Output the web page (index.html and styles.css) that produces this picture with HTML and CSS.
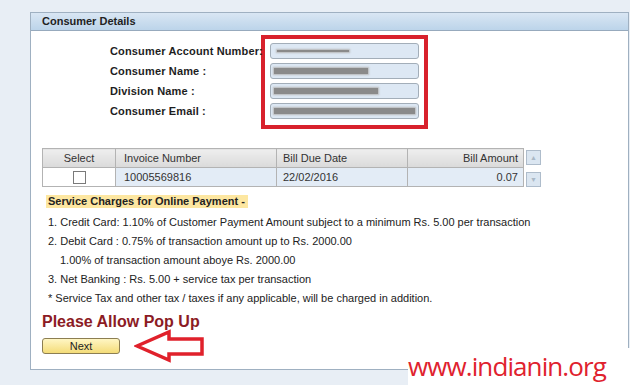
FILE: index.html
```html
<!DOCTYPE html>
<html lang="en">
<head>
    <meta charset="UTF-8">
    <title>Consumer Details</title>
    <link rel="stylesheet" href="styles.css">
</head>
<body>
    <div class="panel">
        <div class="panel-header">Consumer Details</div>

        <div class="details">
            <div class="labels">
                <div class="label">Consumer Account Number:</div>
                <div class="label">Consumer Name :</div>
                <div class="label">Division Name :</div>
                <div class="label">Consumer Email :</div>
            </div>
            <div class="marked">
                <div class="field"><span class="blur thin" style="width: 72px"></span></div>
                <div class="field"><span class="blur" style="width: 94px"></span></div>
                <div class="field"><span class="blur" style="width: 104px"></span></div>
                <div class="field"><span class="blur" style="width: 141px"></span></div>
            </div>
        </div>

        <div class="bills">
            <table class="bill-table">
                <tr>
                    <th class="col-select">Select</th>
                    <th class="col-invoice">Invoice Number</th>
                    <th class="col-date">Bill Due Date</th>
                    <th class="col-amount">Bill Amount</th>
                </tr>
                <tr>
                    <td class="col-select"><span class="checkbox"></span></td>
                    <td class="col-invoice">10005569816</td>
                    <td class="col-date">22/02/2016</td>
                    <td class="col-amount">0.07</td>
                </tr>
            </table>
            <div class="scroller">
                <span class="scroll-btn">&#9650;</span>
                <span class="scroll-btn">&#9660;</span>
            </div>
        </div>

        <div class="charges">
            <div class="charges-title"><span>Service Charges for Online Payment -</span></div>
            <p>1. Credit Card: 1.10% of Customer Payment Amount subject to a minimum Rs. 5.00 per transaction</p>
            <p>2. Debit Card : 0.75% of transaction amount up to Rs. 2000.00</p>
            <p class="indent">1.00% of transaction amount aboye Rs. 2000.00</p>
            <p>3. Net Banking : Rs. 5.00 + service tax per transaction</p>
            <p>* Service Tax and other tax / taxes if any applicable, will be charged in addition.</p>
        </div>

        <div class="popup-note">Please Allow Pop Up</div>
        <div class="actions">
            <button class="next-button">Next</button>
            <svg class="arrow" width="72" height="34" viewBox="0 0 72 34">
                <polygon points="3,17 35,3 35,10 68,10 68,25 35,25 35,31" fill="none" stroke="#e0212b" stroke-width="3.5" stroke-linejoin="miter"/>
            </svg>
        </div>
    </div>

    <div class="watermark">www.indianin.org</div>
</body>
</html>
```

FILE: styles.css
```css
body {
    margin: 0;
    background-color: #e8eef5;
    font-family: "Liberation Sans", Arial, sans-serif;
    color: #1e1e1e;
    height: 385px;
    overflow: hidden;
}
.panel {
    margin: 12px 0 0 30px;
    width: 597px;
    height: 356px;
    background-color: #fff;
    border: 1px solid #9fb0c1;
}
.panel-header {
    height: 17px;
    line-height: 17px;
    padding-left: 11px;
    font-size: 11px;
    font-weight: bold;
    color: #222;
    background: linear-gradient(#d9e6f3, #bcd4ea);
    border-bottom: 1px solid #97aabd;
}
.details {
    display: flex;
    margin: 4px 0 0 79px;
}
.labels {
    width: 151px;
    padding-top: 8px;
}
.label {
    height: 16px;
    line-height: 16px;
    margin-bottom: 4px;
    font-size: 11px;
    font-weight: bold;
    white-space: nowrap;
    letter-spacing: 0.15px;
    position: relative;
    z-index: 1;
}
.marked {
    border: 4px solid #d8212c;
    padding: 4px 5px 6px 5px;
}
.field {
    width: 144px;
    height: 14px;
    margin-bottom: 4px;
    border: 1px solid #a3aeb9;
    border-radius: 3px;
    background-color: #dde8f4;
    display: flex;
    align-items: center;
    padding-left: 3px;
}
.field:last-child {
    margin-bottom: 0;
}
.blur {
    display: block;
    height: 6px;
    background-color: #8a8a8a;
    box-shadow: 0 0 2px 1px #b8b8b8;
}
.blur.thin {
    height: 2px;
    margin-left: 3px;
}
.bills {
    display: flex;
    margin: 19px 0 0 11px;
}
.bill-table {
    width: 482px;
    border-collapse: collapse;
    font-size: 11px;
    color: #333;
}
.bill-table th, .bill-table td {
    height: 18px;
    padding: 0 6px;
    border: 1px solid #b3b3b3;
    font-weight: normal;
    text-align: left;
}
.bill-table th {
    background: linear-gradient(#eeeeee, #dadada);
}
.bill-table td {
    background-color: #e3ecf6;
}
.bill-table .col-select {
    width: 60px;
    text-align: center;
    background-color: #fff;
}
.bill-table th.col-select {
    background: linear-gradient(#eeeeee, #dadada);
}
.bill-table .col-invoice {
    width: 146px;
    padding-left: 8px;
}
.bill-table .col-date {
    width: 118px;
}
.bill-table .col-amount {
    text-align: right;
    padding-right: 5px;
}
.checkbox {
    display: inline-block;
    width: 11px;
    height: 11px;
    border: 1px solid #7a7a7a;
    background-color: #fff;
    vertical-align: middle;
}
.scroller {
    display: flex;
    flex-direction: column;
    gap: 7px;
    margin: 2px 0 0 2px;
}
.scroll-btn {
    width: 13px;
    height: 13px;
    border: 1px solid #aebccb;
    background-color: #dbe6f1;
    color: #aab8c6;
    font-size: 7px;
    line-height: 13px;
    text-align: center;
}
.charges {
    margin: 8px 0 0 15px;
    font-size: 11px;
    color: #222;
}
.charges-title span {
    display: inline-block;
    background-color: #fde7a1;
    padding: 0 3px 0 2px;
    height: 13px;
    line-height: 13px;
    font-weight: bold;
}
.charges-title {
    margin-bottom: 5px;
}
.charges p {
    margin: 0;
    height: 19px;
    line-height: 19px;
    padding-left: 2px;
}
.charges p.indent {
    padding-left: 14px;
}
.popup-note {
    margin: 4px 0 0 11px;
    font-size: 16px;
    line-height: 20px;
    font-weight: bold;
    color: #8c1b24;
}
.actions {
    display: flex;
    align-items: center;
    gap: 14px;
    margin: 6px 0 0 11px;
}
.next-button {
    width: 78px;
    height: 16px;
    padding: 0;
    font-family: "Liberation Sans", Arial, sans-serif;
    font-size: 11px;
    color: #222;
    border: 1px solid #8c7e52;
    border-radius: 3px;
    background: linear-gradient(#fff6c4, #f4dc78);
}
.arrow {
    margin: -9px 0;
}
.watermark {
    position: absolute;
    left: 408px;
    top: 348px;
    width: 222px;
    height: 37px;
    background-color: #fff;
    color: #e0222e;
    font-family: "Open Sans", sans-serif;
    font-size: 26px;
    line-height: 37px;
    letter-spacing: -0.9px;
}
```
